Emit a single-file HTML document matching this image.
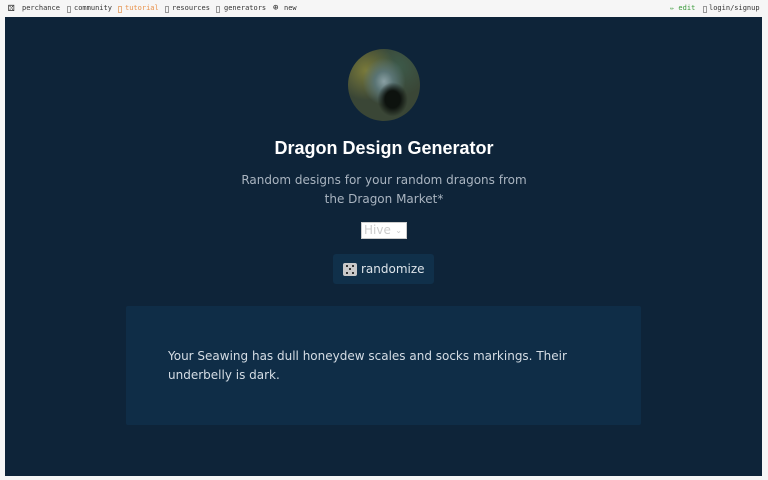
<!DOCTYPE html>
<html><head><meta charset="utf-8"><style>
html,body{margin:0;padding:0;width:768px;height:480px;overflow:hidden;background:#f6f6f6;font-family:"DejaVu Sans","Liberation Sans",sans-serif;}
.bar{position:absolute;top:0;left:0;width:768px;height:17px;font-family:"DejaVu Sans Mono","Liberation Mono",monospace;font-size:7px;line-height:17px;color:#333;}
.bar span{position:absolute;top:0;white-space:nowrap}
.bar b{position:absolute;top:6px;width:2px;height:5px;border:1px solid #999;font-weight:normal}
.panel{position:absolute;left:5px;top:17px;width:757px;height:459px;background:#0e2439;}
.av{position:absolute;left:348px;top:49px;width:72px;height:72px;border-radius:50%;
background:radial-gradient(ellipse at 62% 70%,#0d120e 0 12%,transparent 24%),radial-gradient(ellipse at 50% 45%,#8aa0a4 0,#5a7474 18%,transparent 42%),radial-gradient(circle at 25% 30%,#7a7a3a,transparent 40%),radial-gradient(circle at 70% 25%,#3d5a4a,transparent 40%),#3a4636;}
h1{position:absolute;left:0;width:768px;top:137px;margin:0;text-align:center;font-family:"Liberation Sans",sans-serif;font-size:18px;font-weight:bold;color:#fff;line-height:22px}
.sub{position:absolute;left:0;width:768px;top:171px;text-align:center;font-size:12px;line-height:19px;color:#a9b4c0}
.sel{position:absolute;left:361px;top:222px;width:46px;height:17px;background:#fff;border:1px solid #ccc;box-sizing:border-box;font-size:12px;color:#ccc;line-height:15px;padding-left:2px}
.btn{position:absolute;left:333px;top:254px;width:101px;height:30px;background:#10304a;border-radius:3px;color:#dde4ea;font-size:12px;line-height:30px}
.dice{position:absolute;left:10px;top:9px;width:14px;height:13px;background:#c8c8c8;border-radius:2px}
.dice i{position:absolute;width:2px;height:2px;background:#333}
.card{position:absolute;left:126px;top:306px;width:515px;height:119px;background:#0f2d47;border-radius:2px}
.card p{margin:0;position:absolute;left:42px;top:41px;width:420px;font-size:12px;line-height:19px;color:#d5dde5}
</style></head><body>
<div class="bar">
<span style="left:8px;color:#222;font-size:11px;top:-1px">⚄</span>
<span style="left:22px">perchance</span>
<b style="left:67px"></b><span style="left:74px">community</span>
<b style="left:118px;border-color:#e8b080"></b><span style="left:125px;color:#e8914a">tutorial</span>
<b style="left:165px"></b><span style="left:172px">resources</span>
<b style="left:216px"></b><span style="left:224px">generators</span>
<span style="left:273px;font-size:9px">⊕</span><span style="left:284px">new</span>
<span style="left:670px;color:#3a9a3a">✏ edit</span>
<b style="left:703px"></b><span style="left:709px">login/signup</span>
</div>
<div class="panel"></div>
<div class="av"></div>
<h1>Dragon Design Generator</h1>
<div class="sub">Random designs for your random dragons from<br>the Dragon Market*</div>
<div class="sel">Hive <span style="font-size:8px;position:absolute;right:4px">⌄</span></div>
<div class="btn"><div class="dice"><i style="left:3px;top:2px"></i><i style="left:9px;top:2px"></i><i style="left:6px;top:5px"></i><i style="left:3px;top:9px"></i><i style="left:9px;top:9px"></i></div><span style="position:absolute;left:28px">randomize</span></div>
<div class="card"><p>Your Seawing has dull honeydew scales and socks markings. Their underbelly is dark.</p></div>
</body></html>
